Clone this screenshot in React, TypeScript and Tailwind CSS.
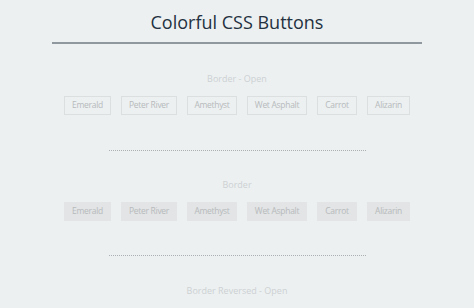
import React from "react";

const buttons: [string, string][] = [
  ["Emerald", "w-[47px]"],
  ["Peter River", "w-[56px]"],
  ["Amethyst", "w-[50px]"],
  ["Wet Asphalt", "w-[60px]"],
  ["Carrot", "w-[40px]"],
  ["Alizarin", "w-[43px]"],
];

function Row({ filled }: { filled: boolean }) {
  return (
    <div className="flex justify-center gap-[10px]">
      {buttons.map(([name, w]) => (
        <div
          key={name}
          className={`${w} h-[19px] flex items-center justify-center text-[8.5px] tracking-[-0.3px] text-[#b7babc] ${
            filled ? "bg-[#e2e4e5]" : "border border-[#dcdfe0]"
          }`}
        >
          {name}
        </div>
      ))}
    </div>
  );
}

export default function App() {
  return (
    <div
      className="w-[474px] h-[308px] bg-[#ecf0f1] overflow-hidden flex flex-col items-center"
      style={{ fontFamily: '"Open Sans", sans-serif' }}
    >
      <h1 className="mt-[9px] text-[18px] leading-[26px] text-[#233140]">Colorful CSS Buttons</h1>
      <div className="mt-[7px] w-[370px] h-[2px] bg-[#8f989f]" />
      <div className="mt-[28px] text-[9px] leading-[14px] text-[#cdd1d3]">Border - Open</div>
      <div className="mt-[10px]">
        <Row filled={false} />
      </div>
      <div className="mt-[35px] w-[257px] border-t border-dotted border-[#aab0b4]" />
      <div className="mt-[27px] text-[9px] leading-[14px] text-[#cdd1d3]">Border</div>
      <div className="mt-[10px]">
        <Row filled />
      </div>
      <div className="mt-[34px] w-[257px] border-t border-dotted border-[#aab0b4]" />
      <div className="mt-[28px] text-[9px] leading-[14px] text-[#cdd1d3]">Border Reversed - Open</div>
    </div>
  );
}
